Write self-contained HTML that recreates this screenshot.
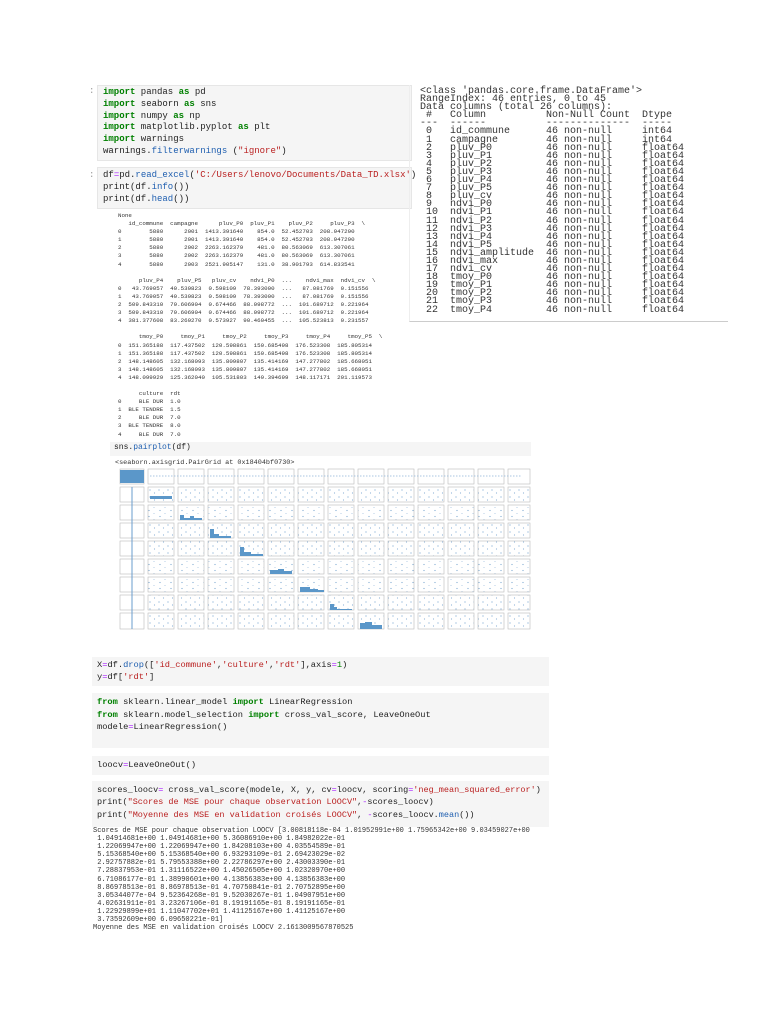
<!DOCTYPE html>
<html><head><meta charset="utf-8"><style>
body{margin:0;width:768px;height:1024px;background:#fff;position:relative;overflow:hidden;font-family:"Liberation Mono","DejaVu Sans Mono",monospace;}
.cell{position:absolute;background:#f5f5f5;border:1px solid #e6e6e6;box-sizing:border-box;}
.code{position:absolute;white-space:pre;font-size:9px;line-height:11.8px;color:#222;}
.k{color:#008000;font-weight:bold}.s{color:#ba2121}.f{color:#1f5fb0}.o{color:#aa22ff}
.out{position:absolute;white-space:pre;color:#333;}
.p{position:absolute;font-size:9px;color:#999}
</style></head><body>
<div class="p" style="left:89px;top:86px">:</div>
<div class="cell" style="left:97px;top:85px;width:315px;height:76px"></div>
<div class="code" style="left:103px;top:87px"><span class="k">import</span> pandas <span class="k">as</span> pd
<span class="k">import</span> seaborn <span class="k">as</span> sns
<span class="k">import</span> numpy <span class="k">as</span> np
<span class="k">import</span> matplotlib.pyplot <span class="k">as</span> plt
<span class="k">import</span> warnings
warnings.<span class="f">filterwarnings</span> (<span class="s">"ignore"</span>)</div>
<div class="p" style="left:89px;top:170px">:</div>
<div class="cell" style="left:97px;top:167px;width:315px;height:42px"></div>
<div class="code" style="left:103px;top:170px">df<span class="o">=</span>pd.<span class="f">read_excel</span>(<span class="s">'C:/Users/lenovo/Documents/Data_TD.xlsx'</span>)
print(df.<span class="f">info</span>())
print(df.<span class="f">head</span>())</div>
<div class="out" style="left:118px;top:212px;font-size:5.8px;line-height:8.1px">None
   id_commune  campagne      pluv_P0  pluv_P1    pluv_P2     pluv_P3  \
0        5880      2001  1413.391640    854.0  52.452703  208.947290
1        5880      2001  1413.391640    854.0  52.452703  208.947290
2        5880      2002  2263.162379    481.0  80.563069  613.307061
3        5880      2002  2263.162379    481.0  80.563069  613.307061
4        5880      2003  2521.905147    131.0  38.901793  614.833541

      pluv_P4    pluv_P5   pluv_cv    ndvi_P0  ...    ndvi_max  ndvi_cv  \
0   43.769057  40.539823  0.598109  78.393000  ...   87.081769  0.151556
1   43.769057  40.539823  0.598109  78.393000  ...   87.081769  0.151556
2  509.843310  79.606904  0.674466  88.098772  ...  101.689712  0.221964
3  509.843310  79.606904  0.674466  88.098772  ...  101.689712  0.221964
4  381.377608  83.269270  0.573927  90.460455  ...  105.523813  0.231557

      tmoy_P0     tmoy_P1     tmoy_P2     tmoy_P3     tmoy_P4     tmoy_P5  \
0  151.365188  117.437502  120.598861  150.685498  176.523308  185.805314
1  151.365188  117.437502  120.598861  150.685498  176.523308  185.805314
2  148.148605  132.168093  135.809807  135.414169  147.277802  185.668051
3  148.148605  132.168093  135.809807  135.414169  147.277802  185.668051
4  148.099929  125.362040  105.531803  149.394699  148.117171  201.119573

      culture  rdt
0     BLE DUR  1.0
1  BLE TENDRE  1.5
2     BLE DUR  7.0
3  BLE TENDRE  8.0
4     BLE DUR  7.0</div>

<div style="position:absolute;left:409px;top:85px;width:318px;height:236px;border-bottom:1px solid #ccc;border-left:1px solid #eee"></div>
<div class="out" style="left:420px;top:88px;font-size:10px;line-height:8.1px;color:#333">&lt;class 'pandas.core.frame.DataFrame'&gt;
RangeIndex: 46 entries, 0 to 45
Data columns (total 26 columns):
 #   Column          Non-Null Count  Dtype
---  ------          --------------  -----
 0   id_commune      46 non-null     int64
 1   campagne        46 non-null     int64
 2   pluv_P0         46 non-null     float64
 3   pluv_P1         46 non-null     float64
 4   pluv_P2         46 non-null     float64
 5   pluv_P3         46 non-null     float64
 6   pluv_P4         46 non-null     float64
 7   pluv_P5         46 non-null     float64
 8   pluv_cv         46 non-null     float64
 9   ndvi_P0         46 non-null     float64
 10  ndvi_P1         46 non-null     float64
 11  ndvi_P2         46 non-null     float64
 12  ndvi_P3         46 non-null     float64
 13  ndvi_P4         46 non-null     float64
 14  ndvi_P5         46 non-null     float64
 15  ndvi_amplitude  46 non-null     float64
 16  ndvi_max        46 non-null     float64
 17  ndvi_cv         46 non-null     float64
 18  tmoy_P0         46 non-null     float64
 19  tmoy_P1         46 non-null     float64
 20  tmoy_P2         46 non-null     float64
 21  tmoy_P3         46 non-null     float64
 22  tmoy_P4         46 non-null     float64</div>

<div class="cell" style="left:110px;top:442px;width:421px;height:14px;border:none"></div>
<div class="code" style="left:114px;top:443px;font-size:8px;line-height:10px">sns.<span class="f">pairplot</span>(df)</div>
<div class="out" style="left:115px;top:459px;font-size:6.8px;line-height:8px">&lt;seaborn.axisgrid.PairGrid at 0x18404bf0730&gt;</div>
<svg style="position:absolute;left:112px;top:467px" width="420" height="166" viewBox="0 0 420 166">
<defs>
<pattern id="d" width="9" height="7" patternUnits="userSpaceOnUse"><circle cx="2" cy="2" r=".6" fill="#7aa6cf"/><circle cx="6.5" cy="5" r=".6" fill="#8fb4d8"/></pattern>
<pattern id="e" width="11" height="6" patternUnits="userSpaceOnUse"><circle cx="4" cy="1.5" r=".6" fill="#7aa6cf"/><circle cx="9" cy="4.5" r=".5" fill="#9bbcdc"/></pattern>
</defs>
<g fill="url(#d)" stroke="#bbb" stroke-width=".6">
<rect x="36" y="20" width="26" height="15"/><rect x="66" y="20" width="26" height="15"/><rect x="96" y="20" width="26" height="15"/><rect x="126" y="20" width="26" height="15"/><rect x="156" y="20" width="26" height="15"/><rect x="186" y="20" width="26" height="15"/><rect x="216" y="20" width="26" height="15"/><rect x="246" y="20" width="26" height="15"/><rect x="276" y="20" width="26" height="15"/><rect x="306" y="20" width="26" height="15"/><rect x="336" y="20" width="26" height="15"/><rect x="366" y="20" width="26" height="15"/><rect x="396" y="20" width="22" height="15"/>
</g>
<g fill="url(#e)" stroke="#bbb" stroke-width=".6">
<rect x="36" y="38" width="26" height="15"/><rect x="66" y="38" width="26" height="15"/><rect x="96" y="38" width="26" height="15"/><rect x="126" y="38" width="26" height="15"/><rect x="156" y="38" width="26" height="15"/><rect x="186" y="38" width="26" height="15"/><rect x="216" y="38" width="26" height="15"/><rect x="246" y="38" width="26" height="15"/><rect x="276" y="38" width="26" height="15"/><rect x="306" y="38" width="26" height="15"/><rect x="336" y="38" width="26" height="15"/><rect x="366" y="38" width="26" height="15"/><rect x="396" y="38" width="22" height="15"/>
</g>
<g fill="url(#d)" stroke="#bbb" stroke-width=".6">
<rect x="36" y="56" width="26" height="15"/><rect x="66" y="56" width="26" height="15"/><rect x="96" y="56" width="26" height="15"/><rect x="126" y="56" width="26" height="15"/><rect x="156" y="56" width="26" height="15"/><rect x="186" y="56" width="26" height="15"/><rect x="216" y="56" width="26" height="15"/><rect x="246" y="56" width="26" height="15"/><rect x="276" y="56" width="26" height="15"/><rect x="306" y="56" width="26" height="15"/><rect x="336" y="56" width="26" height="15"/><rect x="366" y="56" width="26" height="15"/><rect x="396" y="56" width="22" height="15"/>
<rect x="36" y="74" width="26" height="15"/><rect x="66" y="74" width="26" height="15"/><rect x="96" y="74" width="26" height="15"/><rect x="126" y="74" width="26" height="15"/><rect x="156" y="74" width="26" height="15"/><rect x="186" y="74" width="26" height="15"/><rect x="216" y="74" width="26" height="15"/><rect x="246" y="74" width="26" height="15"/><rect x="276" y="74" width="26" height="15"/><rect x="306" y="74" width="26" height="15"/><rect x="336" y="74" width="26" height="15"/><rect x="366" y="74" width="26" height="15"/><rect x="396" y="74" width="22" height="15"/>
</g>
<g fill="url(#e)" stroke="#bbb" stroke-width=".6">
<rect x="36" y="92" width="26" height="15"/><rect x="66" y="92" width="26" height="15"/><rect x="96" y="92" width="26" height="15"/><rect x="126" y="92" width="26" height="15"/><rect x="156" y="92" width="26" height="15"/><rect x="186" y="92" width="26" height="15"/><rect x="216" y="92" width="26" height="15"/><rect x="246" y="92" width="26" height="15"/><rect x="276" y="92" width="26" height="15"/><rect x="306" y="92" width="26" height="15"/><rect x="336" y="92" width="26" height="15"/><rect x="366" y="92" width="26" height="15"/><rect x="396" y="92" width="22" height="15"/>
<rect x="36" y="110" width="26" height="15"/><rect x="66" y="110" width="26" height="15"/><rect x="96" y="110" width="26" height="15"/><rect x="126" y="110" width="26" height="15"/><rect x="156" y="110" width="26" height="15"/><rect x="186" y="110" width="26" height="15"/><rect x="216" y="110" width="26" height="15"/><rect x="246" y="110" width="26" height="15"/><rect x="276" y="110" width="26" height="15"/><rect x="306" y="110" width="26" height="15"/><rect x="336" y="110" width="26" height="15"/><rect x="366" y="110" width="26" height="15"/><rect x="396" y="110" width="22" height="15"/>
</g>
<g fill="url(#d)" stroke="#bbb" stroke-width=".6">
<rect x="36" y="128" width="26" height="15"/><rect x="66" y="128" width="26" height="15"/><rect x="96" y="128" width="26" height="15"/><rect x="126" y="128" width="26" height="15"/><rect x="156" y="128" width="26" height="15"/><rect x="186" y="128" width="26" height="15"/><rect x="216" y="128" width="26" height="15"/><rect x="246" y="128" width="26" height="15"/><rect x="276" y="128" width="26" height="15"/><rect x="306" y="128" width="26" height="15"/><rect x="336" y="128" width="26" height="15"/><rect x="366" y="128" width="26" height="15"/><rect x="396" y="128" width="22" height="15"/>
<rect x="36" y="146" width="26" height="16"/><rect x="66" y="146" width="26" height="16"/><rect x="96" y="146" width="26" height="16"/><rect x="126" y="146" width="26" height="16"/><rect x="156" y="146" width="26" height="16"/><rect x="186" y="146" width="26" height="16"/><rect x="216" y="146" width="26" height="16"/><rect x="246" y="146" width="26" height="16"/><rect x="276" y="146" width="26" height="16"/><rect x="306" y="146" width="26" height="16"/><rect x="336" y="146" width="26" height="16"/><rect x="366" y="146" width="26" height="16"/><rect x="396" y="146" width="22" height="16"/>
</g>
<g stroke="#bbb" stroke-width=".6" fill="#fff">
<rect x="8" y="2" width="24" height="15"/><rect x="8" y="20" width="24" height="15"/><rect x="8" y="38" width="24" height="15"/><rect x="8" y="56" width="24" height="15"/><rect x="8" y="74" width="24" height="15"/><rect x="8" y="92" width="24" height="15"/><rect x="8" y="110" width="24" height="15"/><rect x="8" y="128" width="24" height="15"/><rect x="8" y="146" width="24" height="16"/>
</g>
<line x1="20" y1="20" x2="20" y2="162" stroke="#6a9ccc" stroke-width="1"/>
<rect x="8" y="3" width="24" height="13" fill="#5b97c9"/>
<g stroke="#bbb" stroke-width=".6" fill="#fff">
<rect x="36" y="2" width="26" height="15"/><rect x="66" y="2" width="26" height="15"/><rect x="96" y="2" width="26" height="15"/><rect x="126" y="2" width="26" height="15"/><rect x="156" y="2" width="26" height="15"/><rect x="186" y="2" width="26" height="15"/><rect x="216" y="2" width="26" height="15"/><rect x="246" y="2" width="26" height="15"/><rect x="276" y="2" width="26" height="15"/><rect x="306" y="2" width="26" height="15"/><rect x="336" y="2" width="26" height="15"/><rect x="366" y="2" width="26" height="15"/><rect x="396" y="2" width="22" height="15"/>
</g>
<g stroke="#8fb4d8" stroke-width=".8" stroke-dasharray="1.5 1.5">
<line x1="38" y1="9" x2="410" y2="9"/></g>
<g fill="#5b97c9">
<rect x="38" y="29" width="22" height="3"/>
<rect x="68" y="48" width="4" height="5"/><rect x="72" y="51" width="6" height="2"/><rect x="78" y="49" width="4" height="4"/><rect x="82" y="51" width="8" height="2"/>
<rect x="98" y="62" width="4" height="9"/><rect x="102" y="67" width="5" height="4"/><rect x="107" y="69" width="12" height="2"/>
<rect x="128" y="80" width="4" height="9"/><rect x="132" y="85" width="7" height="4"/><rect x="139" y="87" width="12" height="2"/>
<rect x="158" y="103" width="8" height="4"/><rect x="166" y="102" width="6" height="5"/><rect x="172" y="104" width="8" height="3"/>
<rect x="188" y="120" width="10" height="5"/><rect x="198" y="122" width="8" height="3"/><rect x="206" y="123" width="6" height="2"/>
<rect x="218" y="137" width="4" height="6"/><rect x="222" y="140" width="3" height="3"/><rect x="225" y="142" width="15" height="1"/>
<rect x="248" y="156" width="5" height="6"/><rect x="253" y="155" width="7" height="7"/><rect x="260" y="158" width="10" height="4"/>
</g>
</svg>

<div class="cell" style="left:92px;top:657px;width:457px;height:29px;border:none"></div>
<div class="code" style="left:97px;top:659px;font-size:8.7px;line-height:12px">X<span class="o">=</span>df.<span class="f">drop</span>([<span class="s">'id_commune'</span>,<span class="s">'culture'</span>,<span class="s">'rdt'</span>],axis<span class="o">=</span><span class="k" style="font-weight:normal">1</span>)
y<span class="o">=</span>df[<span class="s">'rdt'</span>]</div>
<div class="cell" style="left:92px;top:693px;width:457px;height:55px;border:none"></div>
<div class="code" style="left:97px;top:696px;font-size:8.7px;line-height:12.5px"><span class="k">from</span> sklearn.linear_model <span class="k">import</span> LinearRegression
<span class="k">from</span> sklearn.model_selection <span class="k">import</span> cross_val_score, LeaveOneOut
modele<span class="o">=</span>LinearRegression()</div>
<div class="cell" style="left:92px;top:756px;width:457px;height:19px;border:none"></div>
<div class="code" style="left:97px;top:759px;font-size:8.7px;line-height:12px">loocv<span class="o">=</span>LeaveOneOut()</div>
<div class="cell" style="left:92px;top:781px;width:457px;height:46px;border:none"></div>
<div class="code" style="left:97px;top:784px;font-size:8.5px;line-height:12.3px">scores_loocv<span class="o">=</span> cross_val_score(modele, X, y, cv<span class="o">=</span>loocv, scoring<span class="o">=</span><span class="s">'neg_mean_squared_error'</span>)
print(<span class="s">"Scores de MSE pour chaque observation LOOCV"</span>,<span class="o">-</span>scores_loocv)
print(<span class="s">"Moyenne des MSE en validation croisés LOOCV"</span>, <span class="o">-</span>scores_loocv.<span class="f">mean</span>())</div>
<div class="out" style="left:93px;top:827px;font-size:7px;line-height:8.1px">Scores de MSE pour chaque observation LOOCV [3.00818118e-04 1.01952991e+00 1.75965342e+00 9.03459027e+00
 1.04914681e+00 1.04914681e+00 5.36086910e+00 1.84982022e-01
 1.22069947e+00 1.22069947e+00 1.84208103e+00 4.03554589e-01
 5.15368540e+00 5.15368540e+00 6.93293109e-01 2.69423029e-02
 2.92757882e-01 5.79553388e+00 2.22786297e+00 2.43003390e-01
 7.28837953e-01 1.31116522e+00 1.45026505e+00 1.02320970e+00
 6.71086177e-01 1.38990601e+00 4.13856383e+00 4.13856383e+00
 8.86978513e-01 8.86978513e-01 4.70750841e-01 2.70752895e+00
 3.05344077e-04 9.52364268e-01 9.52030267e-01 1.04907951e+00
 4.02631911e-01 3.23267106e-01 8.19191165e-01 8.19191165e-01
 1.22929899e+01 1.11047702e+01 1.41125167e+00 1.41125167e+00
 3.73592609e+00 6.09650221e-01]
Moyenne des MSE en validation croisés LOOCV 2.1613009567870525</div>
</body></html>
